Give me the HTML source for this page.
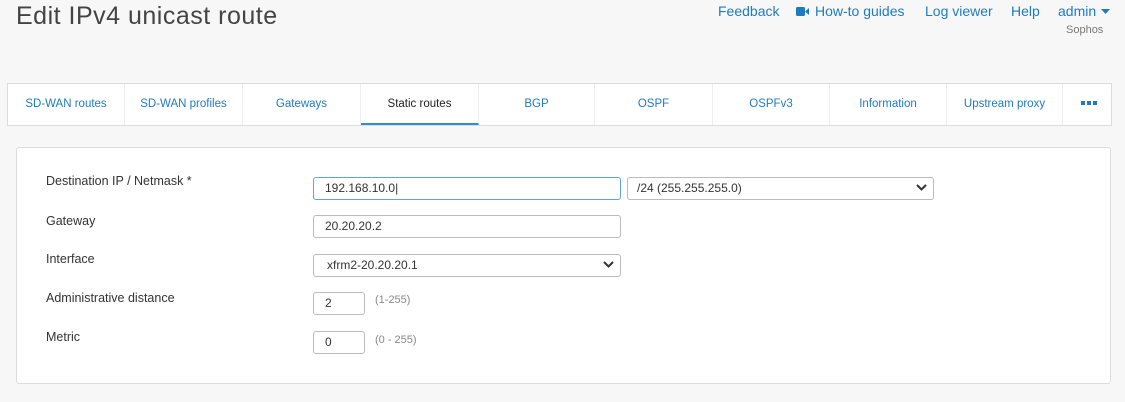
<!DOCTYPE html>
<html><head><style>
*{margin:0;padding:0;box-sizing:border-box}
body{width:1125px;height:402px;background:#f7f7f7;font-family:"Liberation Sans",sans-serif;position:relative;overflow:hidden;color:#333}
.a{position:absolute;white-space:nowrap}
h1{position:absolute;left:16px;top:2px;font-size:25px;font-weight:normal;color:#444;letter-spacing:0.5px}
.top{color:#1f7bc0;font-size:14px;top:3px}
.tabs{position:absolute;left:7px;top:83px;width:1105px;height:43px;background:#fff;border:1px solid #dcdcdc}
.tab{position:absolute;top:0;height:41px;line-height:40px;text-align:center;font-size:11.5px;color:#1f7bc0;border-right:1px solid #eee}
.act{color:#222;border-bottom:2px solid #2a8fd6}
.panel{position:absolute;left:16px;top:147px;width:1095px;height:237px;background:#fff;border:1px solid #dcdcdc;border-radius:3px}
.lbl{font-size:12.5px;color:#333;left:46px}
.in{position:absolute;height:23px;border:1px solid #bbb;border-radius:3px;background:#fff;font-size:12px;line-height:21px;padding-left:11px;color:#333}
.hint{font-size:11px;color:#888}
.chev{position:absolute;right:6px;top:4px}
</style></head><body>
<h1>Edit IPv4 unicast route</h1>
<div class="a top" style="left:718px">Feedback</div>
<svg class="a" style="left:796px;top:6px" width="14" height="11" viewBox="0 0 14 11"><rect x="0" y="1" width="9" height="9" rx="1.5" fill="#1f7bc0"/><path d="M9 5.5L13 2V9Z" fill="#1f7bc0"/></svg>
<div class="a top" style="left:815px">How-to guides</div>
<div class="a top" style="left:925px">Log viewer</div>
<div class="a top" style="left:1011px">Help</div>
<div class="a top" style="left:1058px">admin</div>
<svg class="a" style="left:1101px;top:9px" width="9" height="6"><path d="M0 0H9L4.5 5Z" fill="#1f7bc0"/></svg>
<div class="a" style="left:1066px;top:24px;font-size:11px;color:#777">Sophos</div>
<div class="tabs">
<div class="tab" style="left:0;width:117px">SD-WAN routes</div>
<div class="tab" style="left:117px;width:118px">SD-WAN profiles</div>
<div class="tab" style="left:235px;width:118px">Gateways</div>
<div class="tab act" style="left:353px;width:118px">Static routes</div>
<div class="tab" style="left:471px;width:116px">BGP</div>
<div class="tab" style="left:587px;width:118px">OSPF</div>
<div class="tab" style="left:705px;width:117px">OSPFv3</div>
<div class="tab" style="left:822px;width:117px">Information</div>
<div class="tab" style="left:939px;width:116px">Upstream proxy</div>
</div>
<svg class="a" style="left:1081px;top:101px" width="17" height="4"><rect x="0" y="0" width="4" height="4" fill="#1f7bc0"/><rect x="6" y="0" width="4" height="4" fill="#1f7bc0"/><rect x="12" y="0" width="4" height="4" fill="#1f7bc0"/></svg>
<div class="panel"></div>
<div class="a lbl" style="top:174px">Destination IP / Netmask *</div>
<div class="a lbl" style="top:214px">Gateway</div>
<div class="a lbl" style="top:252px">Interface</div>
<div class="a lbl" style="top:291px">Administrative distance</div>
<div class="a lbl" style="top:330px">Metric</div>
<div class="in" style="left:313px;top:177px;width:308px;border-color:#5fa5dd">192.168.10.0|</div>
<div class="in" style="left:627px;top:177px;width:307px;padding-left:9px">/24 (255.255.255.0)<svg class="chev" width="11" height="12"><path d="M1 3L5.5 7.5L10 3" stroke="#333" stroke-width="2" fill="none"/></svg></div>
<div class="in" style="left:313px;top:215px;width:308px">20.20.20.2</div>
<div class="in" style="left:313px;top:254px;width:308px;padding-left:13px">xfrm2-20.20.20.1<svg class="chev" width="11" height="12"><path d="M1 3L5.5 7.5L10 3" stroke="#333" stroke-width="2" fill="none"/></svg></div>
<div class="in" style="left:313px;top:292px;width:52px">2</div>
<div class="a hint" style="left:375px;top:294px">(1-255)</div>
<div class="in" style="left:313px;top:331px;width:52px">0</div>
<div class="a hint" style="left:375px;top:334px">(0 - 255)</div>
</body></html>
